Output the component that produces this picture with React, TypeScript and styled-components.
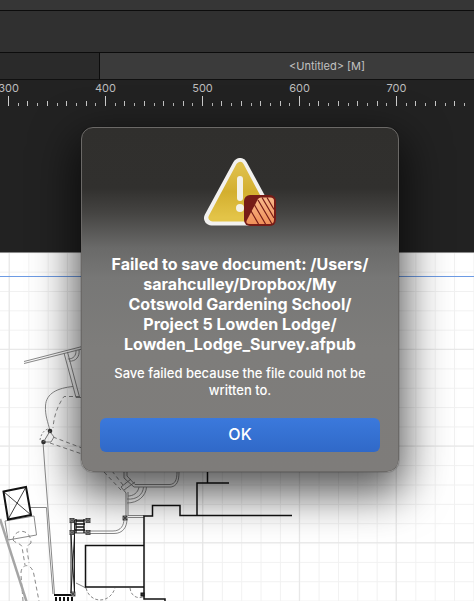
import React from "react";
import styled, { createGlobalStyle } from "styled-components";

const GlobalStyle = createGlobalStyle`
  * { box-sizing: border-box; }
  body { margin: 0; background: #222222; font-family: Inter, "Liberation Sans", sans-serif; }
`;

const Workspace = styled.div`
  position: relative;
  display: flex;
  flex-direction: column;
  min-height: 100vh;
  overflow: hidden;
`;

const Toolbar = styled.div<{ $height: number; $tone: string }>`
  height: ${(p) => p.$height}px;
  flex: none;
  background: ${(p) => p.$tone};
  border-bottom: 1px solid #0c0c0c;
`;

const TabStrip = styled.div`
  display: flex;
  flex: none;
  height: 27px;
  background: #2a2a2a;
  border-bottom: 1px solid #101010;
`;

const TabGap = styled.div`
  width: 100px;
  flex: none;
  border-right: 1px solid #0c0c0c;
`;

const Tab = styled.button`
  flex: 1;
  border: 0;
  padding: 0 0 0 80px;
  background: #3b3b3b;
  color: #c2c2c2;
  font: 400 11px/26px Inter, sans-serif;
  text-align: center;
`;

const RulerBar = styled.div`
  display: flex;
  flex: none;
  height: 26px;
  margin-left: -40px;
  background: #222222;
`;

const RulerCell = styled.div`
  display: flex;
  flex-direction: column;
  justify-content: flex-end;
  width: 97px;
  flex: none;
  color: #bdbdbd;
  font: 400 11px/15px Inter, sans-serif;
  text-align: center;
`;

const Ticks = styled.svg`
  display: block;
`;

const Pasteboard = styled.div`
  flex: none;
  height: 146px;
  background: #222222;
`;

const Page = styled.main`
  flex: 1;
  min-height: 349px;
  display: flex;
  background: #ffffff;
`;

const Plan = styled.svg`
  display: block;
  flex: 1;
  min-width: 0;
  height: 349px;
`;

const Overlay = styled.div`
  position: absolute;
  inset: 0;
  display: flex;
  justify-content: center;
  align-items: flex-start;
  padding: 127px 0 0 6px;
`;

const Dialog = styled.section`
  display: flex;
  flex-direction: column;
  align-items: center;
  width: 318px;
  padding: 30px 18px 19px;
  border: 1px solid #6b6967;
  border-radius: 12px;
  background: linear-gradient(#302f2d 0, #31302e 60px, #454442 85px, #6a6a69 120px, #777776 150px, #7e7d7b 220px, #7e7c7a 100%);
  box-shadow: 0 0 1px #000, 0 16px 44px 6px rgba(0, 0, 0, 0.66);
  color: #ffffff;
  text-align: center;
`;

const AlertIcon = styled.svg`
  display: block;
  width: 76px;
  height: 72px;
`;

const Title = styled.h1`
  margin: 24px 0 0;
  font: 700 16px/20px Inter, sans-serif;
  white-space: nowrap;
`;

const Message = styled.p`
  margin: 11px 0 0;
  font: 500 13px/17px Inter, sans-serif;
  white-space: nowrap;
`;

const OkButton = styled.button`
  width: 100%;
  height: 34px;
  margin-top: 19px;
  border: 0;
  border-radius: 6px;
  padding: 0 0 2px;
  background: linear-gradient(#3b79dc, #3069c8);
  color: #ffffff;
  font: 500 16px/32px Inter, sans-serif;
`;

const marks = ["300", "400", "500", "600", "700"];

function Ruler() {
  return (
    <RulerBar>
      {[...marks, ""].map((m) => (
        <RulerCell key={m}>
          {m}
          <Ticks width="97" height="10" viewBox="0 0 97 10">
            <path d="M48.500 0V10" stroke="#cfcfcf" />
            {[-5, -4, -3, -2, -1, 1, 2, 3, 4].map((n) => (
              <path
                key={n}
                d={`M${Math.round(48 + n * 9.7) + 0.5} ${n % 2 ? 7 : 5}V10`}
                stroke={n % 2 ? "#b8b8b8" : "#c8c8c8"}
              />
            ))}
          </Ticks>
        </RulerCell>
      ))}
    </RulerBar>
  );
}

function Post({ x, y }: { x: number; y: number }) {
  return (
    <g strokeWidth="0.8" stroke="#333">
      <rect x={x - 2} y={y - 2} width="4" height="4" fill="#999" />
      <path d={`M${x - 2} ${y - 2}l4 4m0 -4l-4 4`} />
    </g>
  );
}

function SurveyPlan() {
  return (
    <Plan viewBox="0 252 474 349" preserveAspectRatio="xMinYMin slice" aria-label="Survey plan">
      <defs>
        <pattern id="minor" x="9" y="252.3" width="19.35" height="19.35" patternUnits="userSpaceOnUse">
          <path d="M0.5 0V19.35M0 0.5H19.35" stroke="#f1f1f1" fill="none" />
        </pattern>
        <pattern id="major" x="8.6" y="252" width="96.75" height="96.75" patternUnits="userSpaceOnUse">
          <path d="M0.5 0V96.75M0 0.5H96.75" stroke="#e6e6e6" fill="none" />
        </pattern>
      </defs>
      <rect y="252" width="4000" height="349" fill="url(#minor)" />
      <rect y="252" width="4000" height="349" fill="url(#major)" />
      <path d="M0 252.5H4000" stroke="#8a8a8a" />
      <path d="M0 276.5H4000" stroke="#6d9be4" />
      <g fill="none" stroke="#7c7c7c" strokeWidth="0.9">
        <path d="M24 361.500L84 346M24 363.500L84 348.500M64 353L76 397.500M67.500 352L79.500 397M76 397.500H84M69 361C76 362 80 356 79 350M68 359C74 359 76 355 76 351" />
        <path d="M73 386.500C58 388 46 393 45.500 406C45 416 48 422 50 431M43 442L45 470L51 547L54.500 594" />
        <path d="M30 507.500H46.500L49 545L53 594M5 521L34 516L36.500 535L8 540Z" />
        <path d="M51 433L54 437L51 442L44 442" />
        <path d="M90 531H113C121 531 124 525 124 519M90 533.500H114C123 533.500 127 527 127 519" />
        <path d="M126 516V493L121 487M128 516V492M124 465V478L134 487H171C177 486 179 481 179 472M127 465V476L135 484.500H170C175 484 177 480 177 472M121 487L131 479M124 490L135 482M127 499C136 500 143 495 143.500 487M127 503C138 503 146 496 146.500 487M128 496C133 496 138 493 139 487M128 515.500H144M128 517.500H144" />
      </g>
      <g fill="none" stroke="#888" strokeDasharray="4 3">
        <path d="M80 396.500H64C58 405 54 415 53 428M53 437L82 448M50 443L82 454" />
        <path d="M40 440C41 434 44 430 48 429" strokeDasharray="2 2" />
        <path d="M104 472L121 490M112 471L123 485" />
        <path d="M13 540C14 528 31 528 31 543M13 540C16 544 21 543 22 547L25 565M31 543C28 545 27 546 27 550L29 563M23 601L21 575C20 563 32 562 34 575L39 601" />
        <path d="M86 588C90 604 110 604 115 588M130 588C131 596 137 599 143 597" strokeDasharray="3 2" />
      </g>
      <path d="M76 583L86 588" stroke="#888" />
      <path d="M0 519L27 603" stroke="#a5a5a5" strokeWidth="2.500" />
      <g stroke="#111" fill="none">
        <path d="M3.500 491.500L26 487L31 515L8 519.500Z" strokeWidth="2" />
        <path d="M3.500 491.500L31 515M26 487L8 519.500" strokeWidth="0.800" />
        <path d="M71 520V593M74.500 520V593M71 535L74.500 593M74.500 535L71 593" strokeWidth="0.900" />
        <path d="M71 520H88M71 533H88" strokeWidth="0.800" />
        <path d="M76 519V533M84 519V533M76 521H84M75 524H85M76 527H84M75 530H85" strokeWidth="1.300" />
        <path d="M54 595H75M56 597V601M60 597V601M64 597V601M68 597V601M72 597V601" strokeWidth="2" />
        <path d="M144 587H85.500V545.500H144" strokeWidth="1.500" />
        <path d="M165 601V599H144V516H152.500V505.500H180V515.500H292M197 515V483H229M207.500 483V465" strokeWidth="1.500" />
        <rect x="141" y="593" width="3" height="3" fill="#333" />
      </g>
      <Post x={72} y={520.500} /><Post x={88} y={520.500} />
      <Post x={72} y={532.500} /><Post x={88} y={532.500} />
      <Post x={125} y={518} /><Post x={73} y={594} />
      <circle cx="50" cy="431" r="2.300" fill="#333" />
      <circle cx="43.500" cy="442" r="2.300" fill="#333" />
      <path d="M50 431L43.500 442" stroke="#777" />
    </Plan>
  );
}

function WarningIcon() {
  return (
    <AlertIcon viewBox="0 0 76 72" role="img" aria-label="Warning">
      <defs>
        <linearGradient id="gold" x1="0" y1="0" x2="0" y2="1">
          <stop offset="0" stopColor="#dfc04b" />
          <stop offset="0.5" stopColor="#d3af2f" />
          <stop offset="1" stopColor="#e3c448" />
        </linearGradient>
        <linearGradient id="peach" x1="0" y1="0" x2="0" y2="1">
          <stop offset="0" stopColor="#f9b98a" />
          <stop offset="1" stopColor="#f0905a" />
        </linearGradient>
      </defs>
      <path d="M38 7.500L9.500 60H66.500Z" fill="#f2f1ef" stroke="#f2f1ef" strokeWidth="15" strokeLinejoin="round" />
      <path d="M38 8L10.500 59.500H65.500Z" fill="url(#gold)" stroke="url(#gold)" strokeWidth="8" strokeLinejoin="round" />
      <path d="M38 21V40" stroke="#f3f1e8" strokeWidth="6" strokeLinecap="round" />
      <circle cx="38" cy="50" r="4" fill="#f3f1e8" />
      <rect x="42" y="37" width="32" height="31" rx="6" fill="#761c17" />
      <path d="M59 39.500H68C71 39.500 72 41 72 43V62C72 65 70 66 68 66H47C44 66 44 64 45 62L56 41Q57 39.500 59 39.500Z" fill="url(#peach)" />
      <path d="M56 42L70 66M52.500 47L63.500 66M49 53L56.500 66M60 39.500L72 60M65 39.500L72 51.500" stroke="#761c17" strokeWidth="1.200" />
    </AlertIcon>
  );
}

export default function App() {
  return (
    <>
      <GlobalStyle />
      <Workspace>
        <Toolbar $height={11} $tone="#363636" />
        <Toolbar $height={42} $tone="#303030" />
        <TabStrip>
          <TabGap />
          <Tab>&lt;Untitled&gt; [M]</Tab>
        </TabStrip>
        <Ruler />
        <Pasteboard />
        <Page>
          <SurveyPlan />
        </Page>
        <Overlay>
          <Dialog role="alertdialog" aria-labelledby="alert-title" aria-describedby="alert-message">
            <WarningIcon />
            <Title id="alert-title">
              Failed to save document: /Users/<br />
              sarahculley/Dropbox/My<br />
              Cotswold Gardening School/<br />
              Project 5 Lowden Lodge/<br />
              Lowden_Lodge_Survey.afpub
            </Title>
            <Message id="alert-message">
              Save failed because the file could not be<br />
              written to.
            </Message>
            <OkButton>OK</OkButton>
          </Dialog>
        </Overlay>
      </Workspace>
    </>
  );
}
